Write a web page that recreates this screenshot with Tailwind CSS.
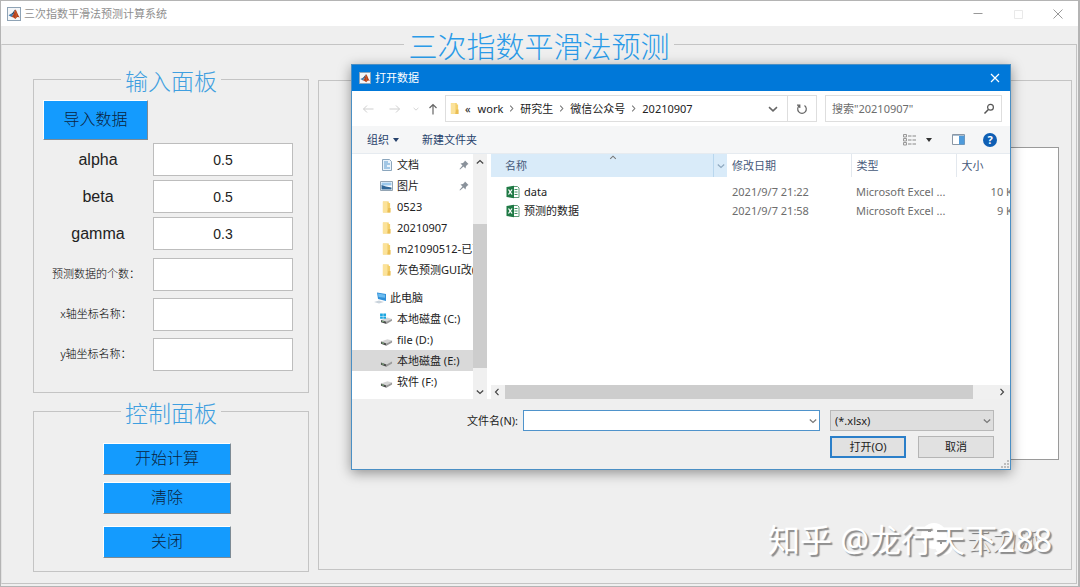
<!DOCTYPE html>
<html lang="zh-CN">
<head>
    <meta charset="UTF-8">
    <meta name="viewport" content="width=device-width, initial-scale=1.0">
    <title>三次指数平滑法预测计算系统</title>
    <script src="https://cdn.jsdelivr.net/npm/@tailwindcss/browser@4"></script>
</head>
<body class="bg-[#efefef] font-['Noto_Sans','Noto_Sans_CJK_SC',sans-serif] text-[11px] leading-4 text-[#222]">
    <!-- Shared icons -->
    <svg class="hidden">
        <symbol id="matlab" viewBox="0 0 14 14">
            <rect x=".5" y=".5" width="13" height="13" fill="#f4f6f8" stroke="#8fa3b5"/>
            <path d="M1.5 8.2 4.6 6.6 6.3 8 4.6 10z" fill="#3b78ad"/>
            <path d="M4.6 6.6C6.2 6 7 3.200 8.200 2.500L6.300 8z" fill="#2b4a6b"/>
            <path d="M8.200 2.500C9.500 3 10.800 8 12.800 10.600 11 9.500 10 9.800 8.500 12 7.500 11.500 6.500 10 4.600 10 6.500 8.500 7.200 5 8.200 2.500z" fill="#b5401e"/>
            <path d="M8.200 2.500C9 5 9.200 8 8.500 12 10 9.800 9.500 5 8.200 2.500z" fill="#e58a3c"/>
        </symbol>
        <symbol id="folder" viewBox="0 0 10 12">
            <path d="M1 0h6.500v1.500H9V12H1z" fill="#f3cf6b"/>
            <path d="M1 0h5v12H1z" fill="#fbe29a"/>
            <path d="M7 7h2.500v5H6z" fill="#e9bd54"/>
        </symbol>
        <symbol id="drive" viewBox="0 0 14 8">
            <path d="M1 3.500 8 1l5 1.500L7 6z" fill="#d5d5d5"/>
            <path d="M1 3.500 7 5.500V8L1 6z" fill="#4d4d4d"/>
            <path d="M7 5.500 13 2.500V4.500L7 8z" fill="#9a9a9a"/>
            <path d="M2 4.800 4 5.500" stroke="#8fd08f"/>
        </symbol>
        <symbol id="pin" viewBox="0 0 10 10">
            <path d="M6 .5 9.500 4 8.500 4.500 7 6 6.500 8.500 4.500 6.500 1 9.500.5 9 3.500 5.500 1.500 3.500 4 3 5.500 1.500z" fill="#8a929b"/>
        </symbol>
        <symbol id="excel" viewBox="0 0 14 14">
            <path d="M6 1.500h5.500L13 3v9.500H6z" fill="#fff" stroke="#5d9b78"/>
            <path d="M8.500 4.500h3M8.500 7h3M8.500 9.500h3" stroke="#3f9463"/>
            <path d="M.5 2 8 .8v12.400L.5 12z" fill="#1f7a45"/>
            <path d="m2.500 4.500 3.500 5M6 4.500l-3.500 5" stroke="#fff" stroke-width="1.300"/>
        </symbol>
        <symbol id="down" viewBox="0 0 8 8">
            <path d="m.8 2.500 3.200 3 3.200-3" fill="none" stroke="currentColor" stroke-width="1.200"/>
        </symbol>
    </svg>

    <div class="relative flex min-h-screen flex-col border border-r-2 border-[#b4b4b4]">
        <!-- Title bar -->
        <header class="flex h-[25px] items-center bg-white pr-[14px] pl-[6px] text-[#8f8f8f]">
            <svg class="h-[14px] w-[14px]"><use href="#matlab"/></svg>
            <span class="ml-[3px] flex-1">三次指数平滑法预测计算系统</span>
            <div class="flex items-center gap-7">
                <button aria-label="最小化"><svg class="h-3 w-3" viewBox="0 0 12 12"><path d="M1.500 5.500h9" stroke="#999"/></svg></button>
                <button aria-label="最大化"><svg class="h-3 w-3" viewBox="0 0 12 12"><path d="M2.500 2.500h8v8h-8z" fill="none" stroke="#e9e9e9"/></svg></button>
                <button aria-label="关闭"><svg class="h-3 w-3" viewBox="0 0 12 12"><path d="m1.500 1.500 9 9m0-9-9 9" stroke="#999"/></svg></button>
            </div>
        </header>

        <fieldset class="mr-px mb-[2px] flex-1 border border-l-[#e2e2e2] border-[#c4c4c4] pb-[10px]">
            <legend class="mx-auto h-9 px-1 pt-[3px] text-[29px] leading-9 font-light text-[#2b9be8]">三次指数平滑法预测</legend>
            <div class="flex gap-[9px] pt-[3px] pr-1 pl-[31px]">
                <!-- Left column -->
                <div class="w-[276px] shrink-0">
                    <fieldset class="border border-[#c4c4c4] pb-[21px]">
                        <legend class="mx-auto h-7 px-1 pt-[2px] text-[23px] leading-7 font-light text-[#3f9fe0]">输入面板</legend>
                        <div class="pr-[15px] pl-[9px]">
                            <button class="mt-[7px] h-10 w-[105px] border border-t-white border-r-[#7d8a94] border-b-[#7d8a94] border-l-white bg-[#149bfe] pb-[2px] text-base font-light text-[#0b2440]">导入数据</button>
                            <div class="mt-[3px] grid grid-cols-[110px_1fr] items-center gap-y-1 text-center font-['Liberation_Sans',sans-serif]">
                                <label for="alpha" class="text-base">alpha</label>
                                <input id="alpha" value="0.5" class="h-[33px] w-full border border-[#bdbdbd] bg-white text-center text-sm">
                                <label for="beta" class="text-base">beta</label>
                                <input id="beta" value="0.5" class="h-[33px] w-full border border-[#bdbdbd] bg-white text-center text-sm">
                                <label for="gamma" class="text-base">gamma</label>
                                <input id="gamma" value="0.3" class="h-[33px] w-full border border-[#bdbdbd] bg-white text-center text-sm">
                            </div>
                            <div class="mt-2 grid grid-cols-[110px_1fr] items-center gap-y-[7px] text-center">
                                <label for="count" class="pr-1 pb-[2px] font-light text-black">预测数据的个数：</label>
                                <input id="count" class="h-[33px] w-full border border-[#bdbdbd] bg-white text-center">
                                <label for="xname" class="pr-1 pb-[2px] font-light text-black">x轴坐标名称：</label>
                                <input id="xname" class="h-[33px] w-full border border-[#bdbdbd] bg-white text-center">
                                <label for="yname" class="pr-1 pb-[2px] font-light text-black">y轴坐标名称：</label>
                                <input id="yname" class="h-[33px] w-full border border-[#bdbdbd] bg-white text-center">
                            </div>
                        </div>
                    </fieldset>

                    <fieldset class="mt-1 border border-[#c4c4c4] pb-[13px]">
                        <legend class="mx-auto h-7 px-1 pt-[2px] text-[23px] leading-7 font-light text-[#3f9fe0]">控制面板</legend>
                        <div class="flex flex-col items-center pt-[18px] pr-2">
                            <button class="h-8 w-32 border border-t-white border-r-[#7d8a94] border-b-[#7d8a94] border-l-white bg-[#149bfe] pb-[2px] text-base leading-5 font-light text-[#0b2440]">开始计算</button>
                            <button class="mt-[7px] h-8 w-32 border border-t-white border-r-[#7d8a94] border-b-[#7d8a94] border-l-white bg-[#149bfe] pb-[2px] text-base leading-5 font-light text-[#0b2440]">清除</button>
                            <button class="mt-3 h-8 w-32 border border-t-white border-r-[#7d8a94] border-b-[#7d8a94] border-l-white bg-[#149bfe] pb-[2px] text-base leading-5 font-light text-[#0b2440]">关闭</button>
                        </div>
                    </fieldset>
                </div>

                <!-- Plot panel -->
                <div class="mt-[15px] mb-[2px] flex flex-1 flex-col border border-[#c4c4c4] pt-[66px] pr-3 pb-[109px] pl-14">
                    <div class="flex-1 border border-[#9a9a9a] bg-white"></div>
                </div>
            </div>
        </fieldset>

        <!-- Open file dialog -->
        <section role="dialog" aria-label="打开数据" class="absolute top-[63px] right-[67px] left-[350px] border border-[#4a8fc4] bg-[#efefef] shadow-[0_3px_12px_rgba(0,0,0,0.4)]">
            <div class="flex h-[26px] items-center bg-[#0078d9] px-[7px] text-white">
                <svg class="h-3 w-3"><use href="#matlab"/></svg>
                <span class="ml-1 flex-1">打开数据</span>
                <button aria-label="关闭" class="mr-[3px]"><svg class="h-[10px] w-[10px]" viewBox="0 0 10 10"><path d="m1 1 8 8m0-8-8 8" stroke="#fff" stroke-width="1.200"/></svg></button>
            </div>

            <!-- Navigation -->
            <div class="flex h-[35px] items-center bg-white pr-2 pl-[10px]">
                <button aria-label="后退"><svg class="h-3 w-3" viewBox="0 0 12 12"><path d="M11.500 6H1.500M5 2.500 1.500 6 5 9.500" fill="none" stroke="#cfcfcf"/></svg></button>
                <button aria-label="前进" class="ml-[15px]"><svg class="h-3 w-3" viewBox="0 0 12 12"><path d="M.5 6h10M7 2.500 10.500 6 7 9.500" fill="none" stroke="#cfcfcf"/></svg></button>
                <button aria-label="最近浏览的位置" class="ml-3 text-[#cfcfcf]"><svg class="h-[6px] w-[6px]"><use href="#down"/></svg></button>
                <button aria-label="上移" class="ml-2"><svg class="h-3 w-3" viewBox="0 0 12 12"><path d="M6 11.500V1.500M2.500 5 6 1.500 9.500 5" fill="none" stroke="#666" stroke-width="1.200"/></svg></button>
                <div class="ml-[6px] flex h-[27px] flex-1 items-center border border-[#dedede] pl-1">
                    <svg class="h-[11px] w-[9px]"><use href="#folder"/></svg>
                    <span class="ml-[6px]">«</span>
                    <span class="ml-[7px]">work</span>
                    <svg class="mx-[5px] h-[7px] w-[7px] -rotate-90 text-[#777]"><use href="#down"/></svg>
                    <span>研究生</span>
                    <svg class="mx-[5px] h-[7px] w-[7px] -rotate-90 text-[#777]"><use href="#down"/></svg>
                    <span>微信公众号</span>
                    <svg class="mx-[5px] h-[7px] w-[7px] -rotate-90 text-[#777]"><use href="#down"/></svg>
                    <span class="flex-1">20210907</span>
                    <button aria-label="以前的位置" class="mr-[9px] text-[#666]"><svg class="h-[10px] w-[10px]"><use href="#down"/></svg></button>
                    <button aria-label="刷新" class="flex h-full w-[29px] items-center justify-center border-l border-[#dedede]"><svg class="h-3 w-3" viewBox="0 0 12 12"><path d="M8.500 2.500A4.300 4.300 0 1 1 3.500 2.500M3.800 5V2.200H1" fill="none" stroke="#666" stroke-width="1.200"/></svg></button>
                </div>
                <div class="ml-2 flex h-[27px] w-[177px] items-center border border-[#dedede] px-[6px]">
                    <input aria-label="搜索" placeholder='搜索"20210907"' class="min-w-0 flex-1 placeholder:text-[#6d6d6d]">
                    <svg class="h-3 w-3" viewBox="0 0 12 12"><circle cx="7.500" cy="4.300" r="2.900" fill="none" stroke="#555" stroke-width="1.200"/><path d="M5.400 6.500 1.500 10.500" stroke="#555" stroke-width="1.500"/></svg>
                </div>
            </div>

            <!-- Toolbar -->
            <div class="flex h-7 items-center border-b border-[#e6ebf0] bg-[#f5f6f7] pr-[13px] pl-[15px] text-[#26416b]">
                <button class="flex items-center gap-1">组织 <svg class="h-1 w-[6px]" viewBox="0 0 6 4"><path d="M0 0h6L3 4z" fill="#26416b"/></svg></button>
                <button class="ml-[23px]">新建文件夹</button>
                <div class="ml-auto flex items-center">
                    <button aria-label="更改视图" class="flex items-center gap-[9px]">
                        <svg class="h-3 w-[14px]" viewBox="0 0 14 12"><path d="M.5.500h3v2.500h-3zM.5 4.500h3V7h-3zM.5 8.500h3V11h-3z" fill="#eee" stroke="#999"/><path d="M5 2h3.500M9.500 2H13M5 6h3.500M9.500 6H13M5 10h3.500M9.500 10H13" stroke="#888"/></svg>
                        <svg class="h-1 w-[6px]" viewBox="0 0 6 4"><path d="M0 0h6L3 4z" fill="#333"/></svg>
                    </button>
                    <button aria-label="预览窗格" class="ml-5"><svg class="h-[11px] w-[13px]" viewBox="0 0 13 11"><path d="M.5.500h12v10H.5z" fill="#fff" stroke="#8a97a5"/><path d="M7 1h5.500v9.500H7z" fill="#4f9bdb"/><path d="M1 1.500h11" stroke="#a9bdd0"/></svg></button>
                    <button aria-label="帮助" class="ml-[18px] h-[14px] w-[14px] rounded-full bg-[#0f5fb4] text-center text-[11px] leading-[14px] font-bold text-white">?</button>
                </div>
            </div>

            <!-- Places and file list -->
            <div class="flex h-[245px] bg-white">
                <nav class="w-[121px] overflow-hidden whitespace-nowrap">
                    <a href="#" class="flex h-[21px] items-center pr-1 pl-7 leading-5"><svg class="h-3 w-[13px]" viewBox="0 0 13 12"><path d="M2.500.500h7l2 2v9h-9z" fill="#eaf3fa" stroke="#8ba6bd"/><path d="M4 3h4M4 5h6M4 7h3M4 9h6" stroke="#5b9bd0"/></svg><span class="ml-1 flex-1">文档</span><svg class="h-[10px] w-[10px]"><use href="#pin"/></svg></a>
                    <a href="#" class="flex h-[21px] items-center pr-1 pl-7 leading-5"><svg class="h-[10px] w-[13px]" viewBox="0 0 13 10"><path d="M.5.500h12v9H.5z" fill="#fff" stroke="#93a4b3"/><path d="M1.500 1.500h10v3h-10z" fill="#9cc9ec"/><path d="M1.500 4 6 5.500l5.500 1v2h-10z" fill="#2f6798"/></svg><span class="ml-1 flex-1">图片</span><svg class="h-[10px] w-[10px]"><use href="#pin"/></svg></a>
                    <a href="#" class="flex h-[21px] items-center pl-7 leading-5"><svg class="mx-[2px] h-3 w-[9px] shrink-0"><use href="#folder"/></svg><span class="ml-1">0523</span></a>
                    <a href="#" class="flex h-[21px] items-center pl-7 leading-5"><svg class="mx-[2px] h-3 w-[9px] shrink-0"><use href="#folder"/></svg><span class="ml-1">20210907</span></a>
                    <a href="#" class="flex h-[21px] items-center pl-7 leading-5"><svg class="mx-[2px] h-3 w-[9px] shrink-0"><use href="#folder"/></svg><span class="ml-1">m21090512-已下载</span></a>
                    <a href="#" class="flex h-[21px] items-center pl-7 leading-5"><svg class="mx-[2px] h-3 w-[9px] shrink-0"><use href="#folder"/></svg><span class="ml-1">灰色预测GUI改(2)</span></a>
                    <a href="#" class="mt-[7px] flex h-[21px] items-center pl-[22px] leading-5"><svg class="h-3 w-[13px]" viewBox="0 0 13 12"><path d="M3 .5 12 2v7L4 7z" fill="#2f8fd8"/><path d="M4 1.500 11 2.700v3L4.500 5z" fill="#6cbcf0"/><path d="M0 10 5 8.500l5 1.500-5 1.500z" fill="#c9d3dc"/></svg><span class="ml-[3px]">此电脑</span></a>
                    <a href="#" class="flex h-[21px] items-center pl-7 leading-5"><svg class="h-[11px] w-[13px]" viewBox="0 0 14 12"><use href="#drive" y="4" width="14" height="8"/><path d="M0 .5h3v2.700H0zM3.500.500h3v2.700h-3zM0 3.700h3v2.700H0zM3.500 3.700h3v2.700h-3z" fill="#1ba5e0"/></svg><span class="ml-1">本地磁盘 (C:)</span></a>
                    <a href="#" class="flex h-[21px] items-center pl-7 leading-5"><svg class="mt-1 h-2 w-[13px]"><use href="#drive"/></svg><span class="ml-1">file (D:)</span></a>
                    <a href="#" class="flex h-[21px] items-center bg-[#d9d9d9] pl-7 leading-5"><svg class="mt-1 h-2 w-[13px]"><use href="#drive"/></svg><span class="ml-1">本地磁盘 (E:)</span></a>
                    <a href="#" class="flex h-[21px] items-center pl-7 leading-5"><svg class="mt-1 h-2 w-[13px]"><use href="#drive"/></svg><span class="ml-1">软件 (F:)</span></a>
                </nav>
                <div class="flex w-[14px] flex-col items-center bg-[#f0f0f0] text-[#444]">
                    <svg class="mt-1 h-2 w-2 rotate-180"><use href="#down"/></svg>
                    <div class="mt-[58px] h-36 w-full bg-[#cdcdcd]"></div>
                    <svg class="mt-auto mb-[3px] h-2 w-2"><use href="#down"/></svg>
                </div>

                <div class="ml-1 flex min-w-0 flex-1 flex-col overflow-hidden">
                    <table class="w-[calc(100%+20px)] table-fixed text-left whitespace-nowrap text-[#6d6d6d]">
                        <colgroup><col class="w-[236px]"><col class="w-[124px]"><col class="w-[105px]"><col></colgroup>
                        <thead class="text-[#46597a]">
                            <tr class="h-[23px]">
                                <th class="relative bg-[#d9ebf9] pl-[14px] font-normal">名称
                                    <svg class="absolute top-0 left-[118px] h-[7px] w-2 rotate-180 text-[#777]"><use href="#down"/></svg>
                                    <span class="absolute inset-y-0 right-0 flex w-[14px] items-center justify-center border-l border-[#b9d7ee] text-[#8fa9c0]"><svg class="h-2 w-2"><use href="#down"/></svg></span>
                                </th>
                                <th class="border-r border-[#e3e8ee] pl-[5px] font-normal">修改日期</th>
                                <th class="border-r border-[#e3e8ee] pl-[5px] font-normal">类型</th>
                                <th class="pl-[5px] font-normal">大小</th>
                            </tr>
                        </thead>
                        <tbody>
                            <tr aria-hidden="true" class="h-[5px]"><td colspan="4"></td></tr>
                            <tr class="h-[19px]">
                                <td class="pl-[15px] text-[#222]"><span class="flex items-center gap-1"><svg class="h-[14px] w-[14px]"><use href="#excel"/></svg>data</span></td>
                                <td class="pl-[5px]">2021/9/7 21:22</td>
                                <td class="pl-[5px]">Microsoft Excel ...</td>
                                <td class="pr-[10px] text-right">10 KB</td>
                            </tr>
                            <tr class="h-[19px]">
                                <td class="pl-[15px] text-[#222]"><span class="flex items-center gap-1"><svg class="h-[14px] w-[14px]"><use href="#excel"/></svg>预测的数据</span></td>
                                <td class="pl-[5px]">2021/9/7 21:58</td>
                                <td class="pl-[5px]">Microsoft Excel ...</td>
                                <td class="pr-[10px] text-right">9 KB</td>
                            </tr>
                        </tbody>
                    </table>
                    <div class="mt-auto flex h-[14px] items-center justify-between bg-[#f0f0f0] px-[2px] text-[#444]">
                        <svg class="h-2 w-2 rotate-90"><use href="#down"/></svg>
                        <div class="mr-[25px] ml-1 h-full flex-1 bg-[#cdcdcd]"></div>
                        <svg class="mr-[2px] h-2 w-2 -rotate-90"><use href="#down"/></svg>
                    </div>
                </div>
            </div>

            <!-- File name and actions -->
            <div class="relative h-[70px] pt-[11px] pr-4">
                <div class="flex items-center">
                    <label for="filename" class="w-[166px] text-right">文件名(N):</label>
                    <div class="relative ml-[5px] flex-1">
                        <input id="filename" class="block h-[21px] w-full border border-[#4f93cb] bg-white pr-5 pl-1">
                        <svg class="absolute top-[7px] right-[3px] h-2 w-2 text-[#777]"><use href="#down"/></svg>
                    </div>
                    <div class="relative ml-[10px] w-[164px]">
                        <select aria-label="文件类型" class="block h-[21px] w-full appearance-none border border-[#b8b8b8] bg-[#dedede] pl-1 leading-4"><option>(*.xlsx)</option></select>
                        <svg class="absolute top-[7px] right-[3px] h-2 w-2 text-[#777]"><use href="#down"/></svg>
                    </div>
                </div>
                <div class="mt-[5px] flex justify-end gap-3">
                    <button class="h-[22px] w-[76px] border-2 border-[#2b7fc9] bg-[#e1e1e1]">打开(O)</button>
                    <button class="h-[22px] w-[76px] border border-[#b5b5b5] bg-[#e1e1e1]">取消</button>
                </div>
                <svg class="absolute right-[1px] bottom-[1px] h-[9px] w-[9px]" viewBox="0 0 9 9"><path d="M7 1h2v2H7zM7 4h2v2H7zM7 7h2v2H7zM4 4h2v2H4zM4 7h2v2H4zM1 7h2v2H1z" fill="#bdbdbd"/></svg>
            </div>
        </section>

        <!-- Watermarks -->
        <div class="pointer-events-none absolute right-9 bottom-7 flex items-center gap-3 text-[25px] leading-8 text-[#efefef] [text-shadow:1px_1px_1px_#777]">
            <svg class="h-9 w-9" viewBox="0 0 36 36"><circle cx="15" cy="14" r="13" fill="#fff"/><circle cx="25" cy="24" r="9" fill="#fff"/><path d="M9 9h3M18 9h3M21 21h2M27 21h2" stroke="#999" stroke-width="2"/></svg>
            <span>云力派</span>
        </div>
        <div class="pointer-events-none absolute right-[26px] bottom-[26px] text-[32px] leading-10 whitespace-nowrap text-white [text-shadow:2px_2px_1px_#8c8c8c]">知乎 @龙行天下288</div>
    </div>
</body>
</html>
